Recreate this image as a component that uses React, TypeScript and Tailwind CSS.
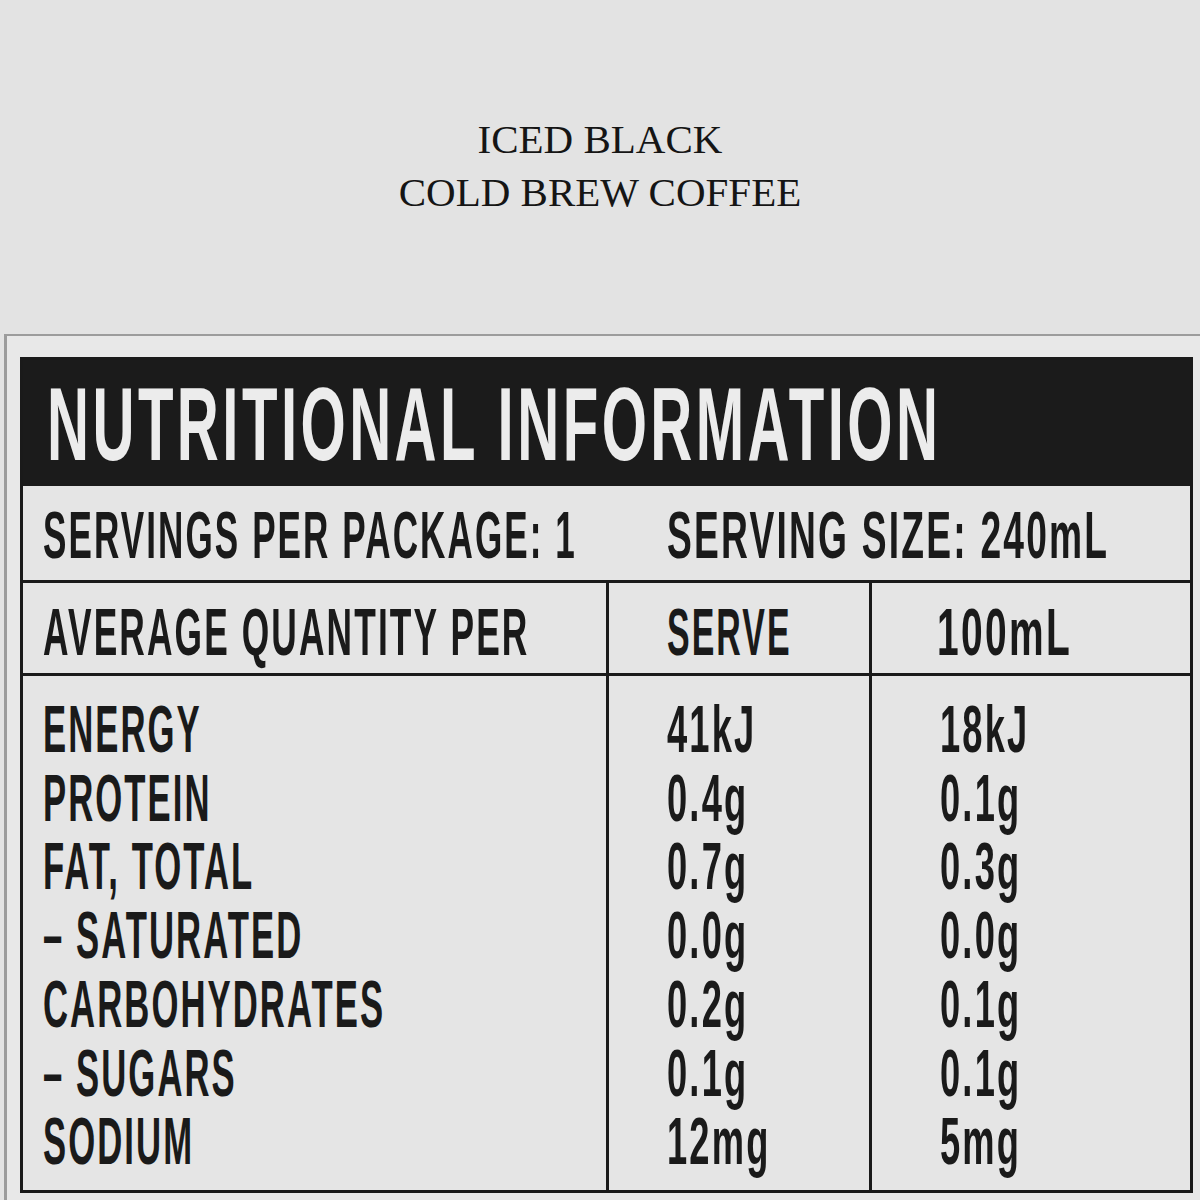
const rows = [
  { label: "ENERGY", serve: "41kJ", per100: "18kJ" },
  { label: "PROTEIN", serve: "0.4g", per100: "0.1g" },
  { label: "FAT, TOTAL", serve: "0.7g", per100: "0.3g" },
  { label: "– SATURATED", serve: "0.0g", per100: "0.0g" },
  { label: "CARBOHYDRATES", serve: "0.2g", per100: "0.1g" },
  { label: "– SUGARS", serve: "0.1g", per100: "0.1g" },
  { label: "SODIUM", serve: "12mg", per100: "5mg" },
];

const font = "font-['Liberation_Sans',Arial,sans-serif] font-bold";

const App = () => {
  return (
    <div className="w-[1200px] h-[1200px] overflow-hidden bg-[#e3e3e3] text-[#1a1a1a]">
      {/* title */}
      <div className="h-[334px] pt-[113px] text-center font-['Liberation_Serif','Times_New_Roman',serif] text-[41px] leading-[53px] text-[#151515]">
        <p>ICED BLACK</p>
        <p>COLD BREW COFFEE</p>
      </div>

      {/* label frame */}
      <div className="ml-[4px] h-[866px] border-t-2 border-l-[3px] border-[#9c9c9c] bg-[#e8e8e8] pl-[13px] pt-[21px] pr-[7px]">
        <div className={`h-[836px] border-[3px] border-[#1a1a1a] bg-[#e5e5e5] ${font}`}>
          {/* header */}
          <div className="h-[126px] bg-[#1b1b1b] pl-[24px] pt-[13px] text-[103px] leading-[103px] tracking-[0.06em] text-[#ececec] whitespace-nowrap">
            <span className="inline-block origin-left scale-x-[0.564]">NUTRITIONAL INFORMATION</span>
          </div>

          {/* servings */}
          <div className="flex h-[97px] border-b-[3px] border-[#1a1a1a] pt-[15px] text-[66px] leading-[68.7px] tracking-[0.06em] whitespace-nowrap">
            <div className="w-[644px] pl-[20px]">
              <span className="inline-block origin-left scale-x-[0.531]">SERVINGS PER PACKAGE: 1</span>
            </div>
            <div>
              <span className="inline-block origin-left scale-x-[0.563]">SERVING SIZE: 240mL</span>
            </div>
          </div>

          {/* column heads */}
          <div className="flex h-[93px] border-b-[3px] border-[#1a1a1a] text-[66px] leading-[68.7px] tracking-[0.06em] whitespace-nowrap">
            <div className="w-[586px] border-r-[3px] border-[#1a1a1a] pl-[20px] pt-[15px]">
              <span className="inline-block origin-left scale-x-[0.535]">AVERAGE QUANTITY PER</span>
            </div>
            <div className="w-[263px] border-r-[3px] border-[#1a1a1a] pl-[58px] pt-[15px]">
              <span className="inline-block origin-left scale-x-[0.514]">SERVE</span>
            </div>
            <div className="flex-1 pl-[65px] pt-[15px]">
              <span className="inline-block origin-left scale-x-[0.59]">100mL</span>
            </div>
          </div>

          {/* values */}
          <div className="flex h-[514px] text-[66px] leading-[68.7px] tracking-[0.06em] whitespace-nowrap">
            <div className="w-[586px] border-r-[3px] border-[#1a1a1a] pl-[20px] pt-[19px]">
              {rows.map((r) => (
                <div key={r.label}>
                  <span className="inline-block origin-left scale-x-[0.525]">{r.label}</span>
                </div>
              ))}
            </div>
            <div className="w-[263px] border-r-[3px] border-[#1a1a1a] pl-[58px] pt-[19px]">
              {rows.map((r) => (
                <div key={r.label}>
                  <span className="inline-block origin-left scale-x-[0.55]">{r.serve}</span>
                </div>
              ))}
            </div>
            <div className="flex-1 pl-[68px] pt-[19px]">
              {rows.map((r) => (
                <div key={r.label}>
                  <span className="inline-block origin-left scale-x-[0.55]">{r.per100}</span>
                </div>
              ))}
            </div>
          </div>
        </div>
      </div>
    </div>
  );
};

export default App;
